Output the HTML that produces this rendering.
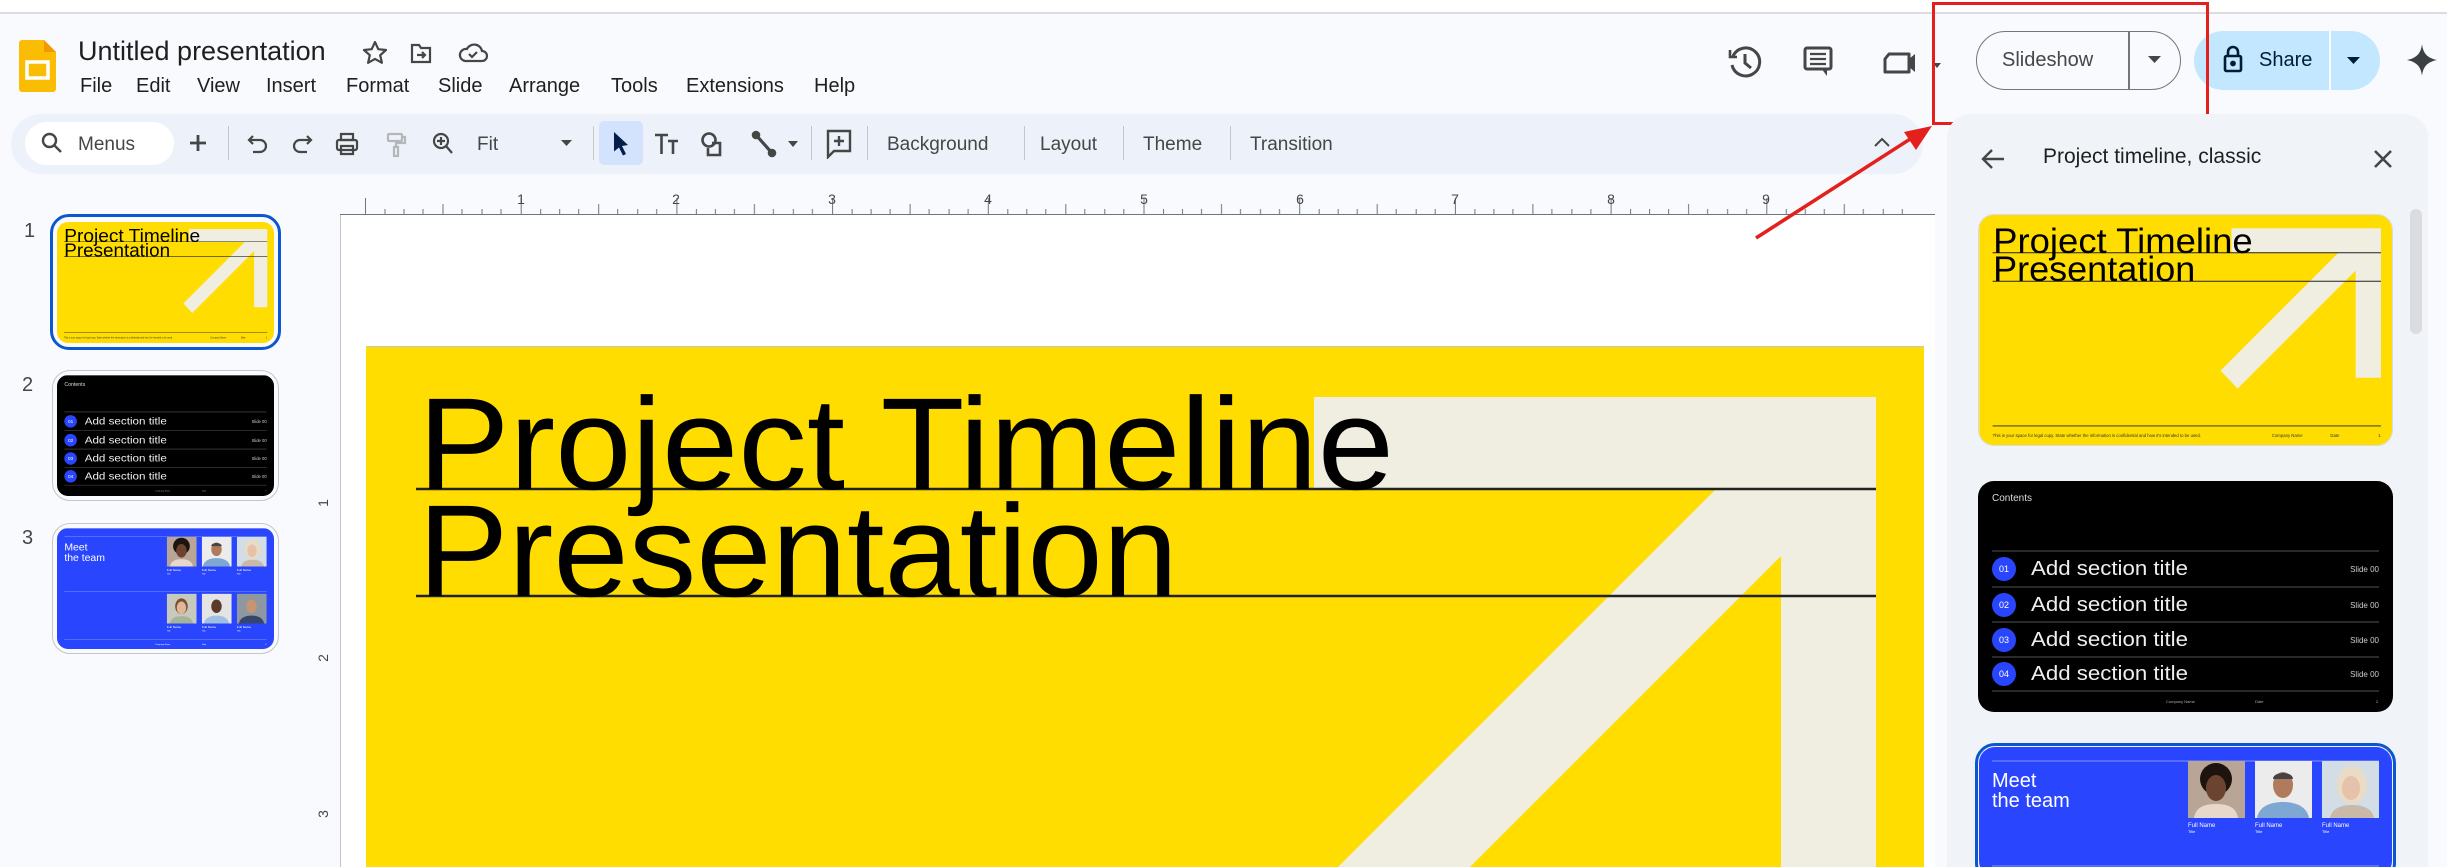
<!DOCTYPE html>
<html><head><meta charset="utf-8">
<style>
*{margin:0;padding:0;box-sizing:border-box}
html,body{width:2447px;height:867px;overflow:hidden}
body{background:#f8fafd;font-family:"Liberation Sans",sans-serif;position:relative;color:#1f1f1f}
.a{position:absolute}
.t{position:absolute;white-space:nowrap}
.menu{font-size:20px;top:75px;color:#1f1f1f}
.tb{font-size:19px;top:134px;color:#444746}
.div{position:absolute;width:1px;background:#c7c7c7;top:126px;height:34px}
</style></head><body>
<div class="a" style="left:0;top:0;width:2447px;height:14px;background:#fff;border-bottom:2px solid #dadce0"></div>

<svg class="a" style="left:19px;top:40px" width="37" height="52" viewBox="0 0 37 52">
<path d="M3 0h22l12 12v37a3 3 0 0 1-3 3H3a3 3 0 0 1-3-3V3a3 3 0 0 1 3-3z" fill="#fbbc04"/>
<path d="M25 0l12 12H25z" fill="#f29900"/>
<rect x="8" y="22" width="21" height="16" fill="none" stroke="#fff" stroke-width="3.5"/>
</svg>
<div class="t" style="left:78px;top:36px;font-size:27px;color:#1f1f1f">Untitled presentation</div>
<svg class="a" style="left:362px;top:40px" width="140" height="26" viewBox="0 0 140 26" fill="none" stroke="#444746" stroke-width="2.2">
<path d="M13 2l3.3 7.2 7.7.8-5.8 5.2 1.7 7.6L13 18.9 6.1 22.8l1.7-7.6L2 10l7.7-.8z" stroke-linejoin="round"/>
<path d="M50 5h7l2 3h9v14H50z"/><path d="M55 15h8m-3-3l3 3-3 3"/>
<path d="M103 21h17a5 5 0 0 0 0-10 8 8 0 0 0-15-2 6 6 0 0 0-2 12z"/><path d="M107 14l3 3 5-5"/>
</svg>
<div class="t menu" style="left:80px">File</div>
<div class="t menu" style="left:136px">Edit</div>
<div class="t menu" style="left:197px">View</div>
<div class="t menu" style="left:266px">Insert</div>
<div class="t menu" style="left:346px">Format</div>
<div class="t menu" style="left:438px">Slide</div>
<div class="t menu" style="left:509px">Arrange</div>
<div class="t menu" style="left:611px">Tools</div>
<div class="t menu" style="left:686px">Extensions</div>
<div class="t menu" style="left:814px">Help</div>

<svg class="a" style="left:1726px;top:44px" width="220" height="38" viewBox="0 0 220 38" fill="none" stroke="#444746" stroke-width="3">
<path d="M7 12a14 14 0 1 1-1 9"/><path d="M4 6v7h7" stroke-width="2.6"/><path d="M19 10v9l6 5"/>
<rect x="79" y="4" width="26" height="21" rx="2"/><path d="M101 24v8l-6-8" fill="#444746" stroke="none"/>
<path d="M84 10h16M84 15h16M84 20h16" stroke-width="2.2"/>
<path d="M163 10l-4 5v13h24V10z" stroke-linejoin="round"/><path d="M183 15l6-5v18l-6-5z" fill="#444746" stroke="none"/>
<path d="M207 19l8 0-4 5z" fill="#444746" stroke="none"/>
</svg>
<div class="a" style="left:1976px;top:31px;width:205px;height:59px;border:1.5px solid #747775;border-radius:30px"></div>
<div class="a" style="left:2128px;top:32px;width:1.5px;height:57px;background:#747775"></div>
<div class="t" style="left:2002px;top:49px;font-size:20px;color:#444746">Slideshow</div>
<svg class="a" style="left:2148px;top:56px" width="14" height="8"><path d="M0 0h13L6.5 7z" fill="#444746"/></svg>
<div class="a" style="left:2194px;top:31px;width:186px;height:59px;background:#c2e7ff;border-radius:30px"></div>
<div class="a" style="left:2329px;top:31px;width:1.5px;height:59px;background:#f8fafd"></div>
<svg class="a" style="left:2223px;top:45px" width="20" height="28" viewBox="0 0 20 28" fill="none" stroke="#001d35" stroke-width="2.6"><rect x="2" y="11" width="16" height="15" rx="1.5"/><path d="M5 11V7a5 5 0 0 1 10 0v4"/><circle cx="10" cy="18.5" r="1.6" fill="#001d35"/></svg>
<div class="t" style="left:2259px;top:49px;font-size:20px;color:#001d35">Share</div>
<svg class="a" style="left:2347px;top:57px" width="14" height="8"><path d="M0 0h13L6.5 7z" fill="#001d35"/></svg>
<svg class="a" style="left:2407px;top:44px" width="30" height="32" viewBox="0 0 30 32"><path d="M15 0C16 9 20 14 30 16 20 18 16 23 15 32 14 23 10 18 0 16 10 14 14 9 15 0z" fill="#3c4043"/></svg>

<div class="a" style="left:11px;top:114px;width:1912px;height:60px;background:#edf2fa;border-radius:30px"></div>
<div class="a" style="left:25px;top:122px;width:149px;height:43px;background:#fff;border-radius:22px"></div>
<svg class="a" style="left:40px;top:131px" width="24" height="24" viewBox="0 0 24 24" fill="none" stroke="#444746" stroke-width="2.4"><circle cx="9.5" cy="9.5" r="6.5"/><path d="M14 14l7 7"/></svg>
<div class="t tb" style="left:78px">Menus</div>
<svg class="a" style="left:188px;top:133px" width="20" height="20"><path d="M10 2v16M2 10h16" stroke="#444746" stroke-width="2.8"/></svg>
<div class="div" style="left:228px"></div>
<svg class="a" style="left:244px;top:130px" width="220" height="28" viewBox="0 0 220 28" fill="none" stroke="#444746" stroke-width="2.2">
<path d="M6 10h10a6 6 0 0 1 0 12H9"/><path d="M9 6L5 10l4 4"/>
<path d="M66 10H56a6 6 0 0 0 0 12h7"/><path d="M63 6l4 4-4 4"/>
<path d="M97 4h12v6H97z"/><rect x="93" y="10" width="20" height="10" rx="2"/><path d="M97 16h12v8H97z"/>
<g stroke="#b4b6b8"><rect x="144" y="4" width="14" height="7" rx="1"/><path d="M158 7h3v6h-9v4"/><rect x="150" y="17" width="4" height="9"/></g>
<circle cx="197" cy="11" r="7"/><path d="M202 16l6 7M197 7v8M193 11h8"/>
</svg>
<div class="t tb" style="left:477px">Fit</div>
<svg class="a" style="left:561px;top:140px" width="12" height="7"><path d="M0 0h11L5.5 6z" fill="#444746"/></svg>
<div class="div" style="left:593px"></div>
<div class="a" style="left:599px;top:121px;width:44px;height:44px;background:#d3e3fd;border-radius:5px"></div>
<svg class="a" style="left:608px;top:130px" width="26" height="28" viewBox="0 0 26 28"><path d="M6 2l14 13-6 1 4 8-3 1.5-4-8-5 4z" fill="#041e49"/></svg>
<svg class="a" style="left:653px;top:130px" width="160" height="28" viewBox="0 0 160 28" fill="none" stroke="#444746" stroke-width="2.6">
<path d="M2 5h13M8.5 5v19M15 11h10M20 11v13"/>
<circle cx="56" cy="10" r="6.5"/><path d="M59 13h8v12H55v-7"/>
<path d="M103 5l16 18" stroke-width="3.2"/><circle cx="103" cy="5" r="3" fill="#444746"/><circle cx="119" cy="23" r="3" fill="#444746"/>
<path d="M135 11h10l-5 6z" fill="#444746" stroke="none"/>
</svg>
<div class="div" style="left:811px"></div>
<svg class="a" style="left:826px;top:129px" width="26" height="30" viewBox="0 0 26 30" fill="none" stroke="#444746" stroke-width="2.4"><path d="M2 2h22v20H8l-6 6z"/><path d="M13 7v10M8 12h10"/></svg>
<div class="div" style="left:867px"></div>
<div class="t tb" style="left:887px">Background</div>
<div class="div" style="left:1024px"></div>
<div class="t tb" style="left:1040px">Layout</div>
<div class="div" style="left:1123px"></div>
<div class="t tb" style="left:1143px">Theme</div>
<div class="div" style="left:1230px"></div>
<div class="t tb" style="left:1250px">Transition</div>
<svg class="a" style="left:1874px;top:137px" width="16" height="10"><path d="M1 9l7-7 7 7" fill="none" stroke="#444746" stroke-width="2"/></svg>

<svg class="a" style="left:0;top:180px" width="1947" height="40">
<defs>
<pattern id="hr" x="365" y="0" width="155.7" height="40" patternUnits="userSpaceOnUse">
<g stroke="#70757a" stroke-width="1">
<line x1="0.5" y1="18" x2="0.5" y2="34"/><line x1="20" y1="29" x2="20" y2="34"/><line x1="39" y1="29" x2="39" y2="34"/><line x1="58" y1="29" x2="58" y2="34"/><line x1="78" y1="24" x2="78" y2="34"/><line x1="97" y1="29" x2="97" y2="34"/><line x1="117" y1="29" x2="117" y2="34"/><line x1="136" y1="29" x2="136" y2="34"/></g>
</pattern>
</defs>
<rect x="365" y="0" width="1557" height="34" fill="url(#hr)"/>
<line x1="340" y1="34.5" x2="1935" y2="34.5" stroke="#70757a"/>
<g font-family="Liberation Sans" font-size="14" fill="#444746" text-anchor="middle">
<text x="521" y="24">1</text><text x="676" y="24">2</text><text x="832" y="24">3</text><text x="988" y="24">4</text><text x="1144" y="24">5</text><text x="1300" y="24">6</text><text x="1455" y="24">7</text><text x="1611" y="24">8</text><text x="1766" y="24">9</text>
</g>
</svg>
<div class="a" style="left:340px;top:215px;width:1595px;height:652px;background:#fff;border-left:1px solid #c4c7c5"></div>
<svg class="a" style="left:0;top:0" width="345" height="867">
<defs><pattern id="vr2" x="0" y="347" width="40" height="155.7" patternUnits="userSpaceOnUse">
<g stroke="#70757a" stroke-width="1">
<line y1="0.5" x1="324" y2="0.5" x2="339"/><line y1="20" x1="334" y2="20" x2="339"/><line y1="39" x1="334" y2="39" x2="339"/><line y1="58" x1="334" y2="58" x2="339"/><line y1="78" x1="329" y2="78" x2="339"/><line y1="97" x1="334" y2="97" x2="339"/><line y1="117" x1="334" y2="117" x2="339"/><line y1="136" x1="334" y2="136" x2="339"/></g></pattern></defs>
<rect x="0" y="347" width="340" height="520" fill="url(#vr2)"/>
<g font-family="Liberation Sans" font-size="14" fill="#444746" text-anchor="middle">
<text transform="translate(328 503) rotate(-90)">1</text><text transform="translate(328 658) rotate(-90)">2</text><text transform="translate(328 814) rotate(-90)">3</text></g>
</svg>

<div class="a" style="left:366px;top:346px;width:1558px;height:521px;overflow:hidden;border-top:1px solid #c4c7c5">
<svg width="1558" height="876" viewBox="0 0 1558 876" style="display:block">
<rect width="1558" height="876" fill="#ffdd00"/>
<polygon points="948,50 1510,50 1510,612 1415,612 1415,209 971,653 907,585 1350,142 948,142" fill="#f0ede1"/>
<line x1="50" y1="142" x2="1510" y2="142" stroke="#222" stroke-width="2.5"/>
<line x1="50" y1="249" x2="1510" y2="249" stroke="#222" stroke-width="2.5"/>
<g font-family="Liberation Sans" font-size="131" fill="#000">
<text x="52" y="142" textLength="976" lengthAdjust="spacingAndGlyphs">Project Timeline</text>
<text x="52" y="249" textLength="760" lengthAdjust="spacingAndGlyphs">Presentation</text></g>
</svg></div>

<div class="a" style="left:1932px;top:2px;width:277px;height:123px;border:3.5px solid #e3201b"></div>
<svg class="a" style="left:1740px;top:110px" width="200" height="140"><line x1="16" y1="128" x2="178" y2="24" stroke="#e3201b" stroke-width="3.5"/><path d="M192 16L164 22l12 18z" fill="#e3201b"/></svg>

<div class="t" style="left:24px;top:220px;font-size:20px;color:#444746">1</div>
<div class="t" style="left:22px;top:374px;font-size:20px;color:#444746">2</div>
<div class="t" style="left:22px;top:527px;font-size:20px;color:#444746">3</div>
<div class="a" style="left:50px;top:214px;width:231px;height:136px;border:3.5px solid #0b57d0;border-radius:19px"></div>
<div class="a" style="left:52px;top:370px;width:227px;height:131px;border:1.5px solid #c4c7c5;border-radius:18px"></div>
<div class="a" style="left:52px;top:523px;width:227px;height:131px;border:1.5px solid #c4c7c5;border-radius:18px"></div>

<svg width="0" height="0" style="position:absolute">
<defs>
<symbol id="ys" viewBox="0 0 1558 876">
<rect width="1558" height="876" fill="#ffdd00"/>
<polygon points="948,50 1510,50 1510,612 1415,612 1415,209 971,653 907,585 1350,142 948,142" fill="#f0ede1"/>
<line x1="50" y1="142" x2="1510" y2="142" stroke="#222" stroke-width="4"/>
<line x1="50" y1="249" x2="1510" y2="249" stroke="#222" stroke-width="4"/>
<g font-family="Liberation Sans" font-size="131" fill="#000"><text x="52" y="142" textLength="976" lengthAdjust="spacingAndGlyphs">Project Timeline</text><text x="52" y="249" textLength="760" lengthAdjust="spacingAndGlyphs">Presentation</text></g>
<line x1="50" y1="793" x2="1510" y2="793" stroke="#222" stroke-width="3"/>
<g font-family="Liberation Sans" font-size="16" fill="#333"><text x="50" y="835">This is your space for legal copy. State whether the information is confidential and how it's intended to be used.</text><text x="1100" y="835">Company Name</text><text x="1320" y="835">Date</text><text x="1500" y="835">1</text></g>
</symbol>
<symbol id="bs" viewBox="0 0 415 232">
<rect width="415" height="232" fill="#000"/>
<text x="14" y="20" font-family="Liberation Sans" font-size="10" fill="#ddd">Contents</text>
<g stroke="#555" stroke-width="1"><line x1="14" y1="70" x2="401" y2="70"/><line x1="14" y1="106" x2="401" y2="106"/><line x1="14" y1="141" x2="401" y2="141"/><line x1="14" y1="176" x2="401" y2="176"/><line x1="14" y1="210" x2="401" y2="210"/></g>
<g fill="#2a45fe"><circle cx="26" cy="88" r="12"/><circle cx="26" cy="124" r="12"/><circle cx="26" cy="159" r="12"/><circle cx="26" cy="193" r="12"/></g>
<g font-family="Liberation Sans" font-size="9" fill="#fff" text-anchor="middle"><text x="26" y="91">01</text><text x="26" y="127">02</text><text x="26" y="162">03</text><text x="26" y="196">04</text></g>
<g font-family="Liberation Sans" font-size="20" fill="#eee"><text x="53" y="94" textLength="157" lengthAdjust="spacingAndGlyphs">Add section title</text><text x="53" y="130" textLength="157" lengthAdjust="spacingAndGlyphs">Add section title</text><text x="53" y="165" textLength="157" lengthAdjust="spacingAndGlyphs">Add section title</text><text x="53" y="199" textLength="157" lengthAdjust="spacingAndGlyphs">Add section title</text></g>
<g font-family="Liberation Sans" font-size="8" fill="#ccc" text-anchor="end"><text x="401" y="91">Slide 00</text><text x="401" y="127">Slide 00</text><text x="401" y="162">Slide 00</text><text x="401" y="196">Slide 00</text></g>
<g font-family="Liberation Sans" font-size="4" fill="#aaa"><text x="188" y="222">Company Name</text><text x="277" y="222">Date</text><text x="398" y="222">2</text></g>
</symbol>
<symbol id="ph1" viewBox="0 0 57 57"><rect width="57" height="57" fill="#b8a596"/><circle cx="28" cy="18" r="16" fill="#1d1410"/><ellipse cx="28" cy="27" rx="10" ry="13" fill="#6b4330"/><path d="M6 57c2-12 12-14 22-14s20 2 22 14z" fill="#e7d8cb"/></symbol>
<symbol id="ph2" viewBox="0 0 57 57"><rect width="57" height="57" fill="#ececec"/><ellipse cx="28" cy="24" rx="10" ry="13" fill="#b07a5c"/><path d="M18 18c0-8 20-8 20 0z" fill="#444"/><path d="M2 57c2-12 14-16 26-16s24 4 26 16z" fill="#7ea7d4"/></symbol>
<symbol id="ph3" viewBox="0 0 57 57"><rect width="57" height="57" fill="#d2dde6"/><ellipse cx="30" cy="24" rx="15" ry="19" fill="#e9dcc4"/><ellipse cx="29" cy="27" rx="9" ry="12" fill="#e6c2aa"/><path d="M8 57c2-10 12-13 22-13s20 3 22 13z" fill="#c9b9a8"/></symbol>
<symbol id="ph4" viewBox="0 0 57 57"><rect width="57" height="57" fill="#c7c9bd"/><ellipse cx="28" cy="24" rx="12" ry="15" fill="#7a5030"/><ellipse cx="28" cy="27" rx="9" ry="12" fill="#e0b79a"/><path d="M6 57c2-12 12-14 22-14s20 2 22 14z" fill="#a4b39a"/></symbol>
<symbol id="ph5" viewBox="0 0 57 57"><rect width="57" height="57" fill="#e4e4e4"/><ellipse cx="28" cy="24" rx="10" ry="13" fill="#5a3a28"/><path d="M4 57c2-12 14-15 24-15s22 3 24 15z" fill="#9fc0df"/></symbol>
<symbol id="ph6" viewBox="0 0 57 57"><rect width="57" height="57" fill="#8d98a0"/><ellipse cx="28" cy="24" rx="10" ry="13" fill="#c79475"/><path d="M4 57c2-12 14-15 24-15s22 3 24 15z" fill="#34466a"/></symbol>
<symbol id="us" viewBox="0 0 415 232">
<rect width="415" height="232" fill="#2a45fe"/>
<g stroke="#6f83ff" stroke-width="1.2"><line x1="14" y1="16" x2="401" y2="16"/><line x1="14" y1="121" x2="401" y2="121"/><line x1="14" y1="213" x2="401" y2="213"/></g>
<g font-family="Liberation Sans" font-size="20" fill="#fff"><text x="14" y="42">Meet</text><text x="14" y="62">the team</text></g>
<use href="#ph1" x="210" y="16" width="57" height="57"/><use href="#ph2" x="277" y="16" width="57" height="57"/><use href="#ph3" x="344" y="16" width="57" height="57"/>
<use href="#ph4" x="210" y="125" width="57" height="57"/><use href="#ph5" x="277" y="125" width="57" height="57"/><use href="#ph6" x="344" y="125" width="57" height="57"/>
<g font-family="Liberation Sans" fill="#fff"><g font-size="6"><text x="210" y="82">Full Name</text><text x="277" y="82">Full Name</text><text x="344" y="82">Full Name</text><text x="210" y="191">Full Name</text><text x="277" y="191">Full Name</text><text x="344" y="191">Full Name</text></g>
<g font-size="4"><text x="210" y="88">Title</text><text x="277" y="88">Title</text><text x="344" y="88">Title</text><text x="210" y="197">Title</text><text x="277" y="197">Title</text><text x="344" y="197">Title</text></g>
<g font-size="4"><text x="188" y="223">Company Name</text><text x="277" y="223">Date</text><text x="398" y="223">3</text></g></g>
</symbol>
</defs></svg>

<div class="a" style="left:57px;top:222px;width:217px;height:121px;border-radius:11px;overflow:hidden"><svg width="217" height="122" style="display:block"><use href="#ys" width="217" height="122"/></svg></div>
<div class="a" style="left:57px;top:375px;width:217px;height:121px;border-radius:11px;overflow:hidden"><svg width="217" height="122" style="display:block"><use href="#bs" width="217" height="122"/></svg></div>
<div class="a" style="left:57px;top:528px;width:217px;height:121px;border-radius:11px;overflow:hidden"><svg width="217" height="122" style="display:block"><use href="#us" width="217" height="122"/></svg></div>

<div class="a" style="left:1947px;top:114px;width:481px;height:753px;background:#f0f4f9;border-radius:24px 24px 0 0"></div>
<svg class="a" style="left:1981px;top:148px" width="24" height="22" viewBox="0 0 24 22" fill="none" stroke="#444746" stroke-width="2.4"><path d="M23 11H3M11 2L2 11l9 9"/></svg>
<div class="t" style="left:2043px;top:145px;font-size:21px;color:#1f1f1f">Project timeline, classic</div>
<svg class="a" style="left:2373px;top:149px" width="20" height="20"><path d="M2 2l16 16M18 2L2 18" stroke="#444746" stroke-width="2.6"/></svg>
<div class="a" style="left:2410px;top:209px;width:12px;height:125px;background:#dadce0;border-radius:6px"></div>

<div class="a" style="left:1978px;top:214px;width:415px;height:232px;border-radius:16px;overflow:hidden;border:1px solid #d8dbe0"><svg width="415" height="232" style="display:block"><use href="#ys" width="415" height="233"/></svg></div>
<div class="a" style="left:1978px;top:481px;width:415px;height:231px;border-radius:16px;overflow:hidden"><svg width="415" height="232" style="display:block"><use href="#bs" width="415" height="232"/></svg></div>
<div class="a" style="left:1970px;top:740px;width:431px;height:127px;overflow:hidden">
<div class="a" style="left:5px;top:3px;width:421px;height:140px;border:3px solid #0b57d0;border-radius:20px"></div>
<div class="a" style="left:9px;top:7px;width:413px;height:130px;border-radius:16px;overflow:hidden"><svg width="413" height="232" style="display:block"><use href="#us" x="-1" y="-2" width="415" height="232"/></svg></div>
</div>
</body></html>
